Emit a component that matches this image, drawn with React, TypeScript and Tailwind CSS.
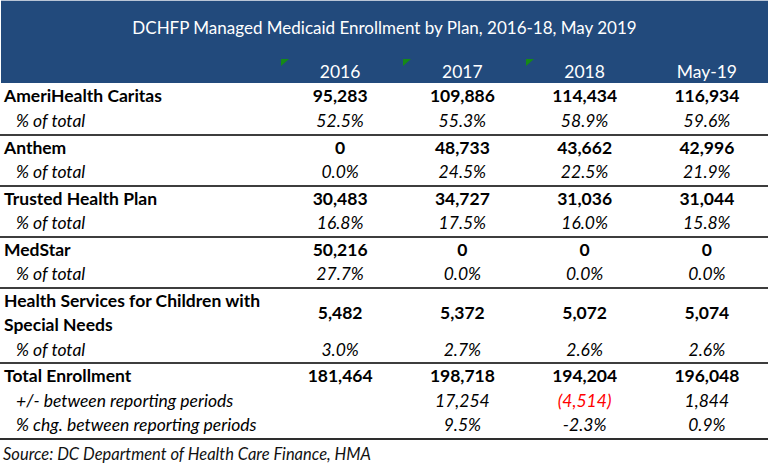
import React from "react";

type Plan = {
  name: string[];
  values: string[];
  pct: string[];
};

const plans: Plan[] = [
  { name: ["AmeriHealth Caritas"], values: ["95,283", "109,886", "114,434", "116,934"], pct: ["52.5%", "55.3%", "58.9%", "59.6%"] },
  { name: ["Anthem"], values: ["0", "48,733", "43,662", "42,996"], pct: ["0.0%", "24.5%", "22.5%", "21.9%"] },
  { name: ["Trusted Health Plan"], values: ["30,483", "34,727", "31,036", "31,044"], pct: ["16.8%", "17.5%", "16.0%", "15.8%"] },
  { name: ["MedStar"], values: ["50,216", "0", "0", "0"], pct: ["27.7%", "0.0%", "0.0%", "0.0%"] },
  {
    name: ["Health Services for Children with", "Special Needs"],
    values: ["5,482", "5,372", "5,072", "5,074"],
    pct: ["3.0%", "2.7%", "2.6%", "2.6%"]
  }
];

const years = ["2016", "2017", "2018", "May-19"];

const font = { fontFamily: "Lato, 'Liberation Sans', sans-serif" };

function Flag() {
  // excel's little green error marker in the cell corner
  return (
    <svg className="absolute left-[2px] top-[2px]" width="8" height="8" viewBox="0 0 8 8">
      <polygon points="0,0 8,0 0,7" fill="#168a16" />
    </svg>
  );
}

function Row({ label, values, bold, indent, className }: { label: React.ReactNode; values: string[]; bold?: boolean; indent?: boolean; className: string }) {
  return (
    <div className={`grid grid-cols-[279px_repeat(4,1fr)] items-center ${className}`}>
      <div className={`${indent ? "pl-[16px] italic" : "pl-[4px] font-bold"} text-[17.5px] leading-[24.5px] text-black`}>{label}</div>
      {values.map((v, i) => (
        <div
          key={i}
          className={`text-center text-[17.5px] leading-[24px] ${bold ? "font-bold" : "italic"} ${v.startsWith("(") ? "text-[#ff0000]" : "text-black"}`}
        >
          {v}
        </div>
      ))}
    </div>
  );
}

export default function App() {
  return (
    <div className="h-[464px] w-[768px] overflow-hidden bg-white" style={font}>
      <div className="ml-px border-t border-[#b9c5d6] bg-[#224a7c] text-white">
        <div className="flex h-[56px] items-center justify-center pb-[2px] text-[17px]">
          DCHFP Managed Medicaid Enrollment by Plan, 2016-18, May 2019
        </div>
        <div className="grid h-[26px] grid-cols-[278px_repeat(4,1fr)] text-[17.5px] leading-[22px]">
          <div />
          {years.map((y, i) => (
            <div key={y} className="relative h-full text-center">
              {i < 3 ? <Flag /> : null}
              <span className="absolute inset-x-0 bottom-0">{y}</span>
            </div>
          ))}
        </div>
      </div>

      {plans.map((p, idx) => (
        <div key={p.name[0]} className="border-b-2 border-[#3d3d3d]">
          <Row
            label={p.name.length > 1 ? (
              <>
                {p.name[0]}
                <br />
                {p.name[1]}
              </>
            ) : (
              p.name[0]
            )}
            values={p.values}
            bold
            className={p.name.length > 1 ? "h-[49px]" : idx === 0 ? "h-[26px]" : "h-[24.5px]"}
          />
          <Row label="% of total" values={p.pct} indent className="h-[24.5px]" />
        </div>
      ))}

      <div className="border-b-2 border-[#2e2e2e]">
        <Row label="Total Enrollment" values={["181,464", "198,718", "194,204", "196,048"]} bold className="h-[24.5px]" />
        <Row label="+/- between reporting periods" values={["", "17,254", "(4,514)", "1,844"]} indent className="h-[24.5px]" />
        <Row label="% chg. between reporting periods" values={["", "9.5%", "-2.3%", "0.9%"]} indent className="h-[24.5px]" />
      </div>

      <div className="pl-[3px] pt-[2px] text-[16.5px] italic text-[#111]">Source: DC Department of Health Care Finance, HMA</div>
    </div>
  );
}
